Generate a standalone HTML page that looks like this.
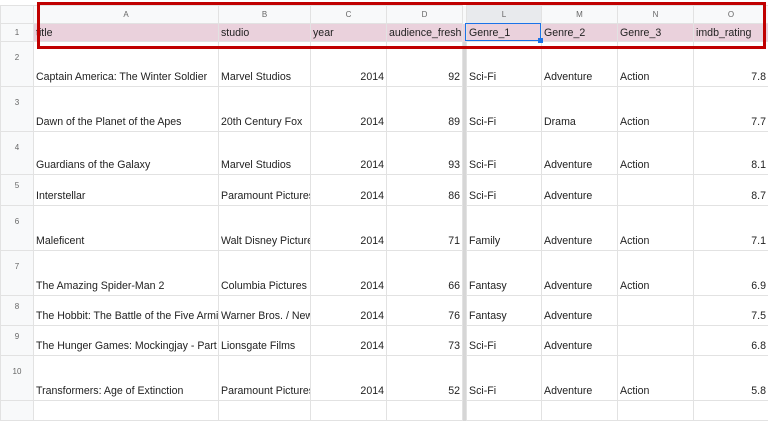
<!DOCTYPE html><html><head><style>
body{margin:0;width:768px;height:413px;overflow:hidden;background:#fff;font-family:"Liberation Sans",Arial,sans-serif;position:relative}
table{position:absolute;left:0;top:5px;width:768px;border-collapse:collapse;table-layout:fixed;font-size:10.6px;color:#222}
td{border:1px solid #e2e2e2;padding:0 2px 3px 2px;vertical-align:bottom;white-space:nowrap;overflow:hidden;height:0}
td.r{background:#f8f9fa;color:#666;font-size:8px;text-align:center;vertical-align:top;padding:11px 0 0 0}
tr.c td{background:#f8f9fa;color:#666;font-size:8px;text-align:center;vertical-align:middle;padding:0}
tr.p td{background:#ead1dc;vertical-align:middle;padding-bottom:0}
tr.p td.r{background:#f8f9fa;padding-top:0;vertical-align:middle}
.n{text-align:right}
td.d{background:#d6d6d6;border:none;padding:0}
.box{position:absolute;left:37px;top:2px;width:723px;height:41px;border:3px solid #c00000}
.sel{position:absolute;left:465px;top:23px;width:74px;height:16px;border:1px solid #1a73e8}
.sel:after{content:"";position:absolute;right:-3px;bottom:-3px;width:5px;height:5px;background:#1a73e8}
</style></head><body>
<table>
<colgroup><col style="width:33px"><col style="width:185px"><col style="width:92px"><col style="width:76px"><col style="width:76px"><col style="width:4px"><col style="width:75px"><col style="width:76px"><col style="width:76px"><col style="width:75px"></colgroup>
<tr class="c" style="height:18px"><td></td><td>A</td><td>B</td><td>C</td><td>D</td><td class="d"></td><td style="background:#e8eaed">L</td><td>M</td><td>N</td><td>O</td></tr>
<tr class="p" style="height:18px"><td class="r">1</td><td>title</td><td>studio</td><td>year</td><td>audience_freshr</td><td class="d"></td><td>Genre_1</td><td>Genre_2</td><td>Genre_3</td><td>imdb_rating</td></tr>
<tr style="height:45px"><td class="r">2</td><td>Captain America: The Winter Soldier</td><td>Marvel Studios</td><td class="n">2014</td><td class="n">92</td><td class="d"></td><td>Sci-Fi</td><td>Adventure</td><td>Action</td><td class="n">7.8</td></tr>
<tr style="height:45px"><td class="r">3</td><td>Dawn of the Planet of the Apes</td><td>20th Century Fox</td><td class="n">2014</td><td class="n">89</td><td class="d"></td><td>Sci-Fi</td><td>Drama</td><td>Action</td><td class="n">7.7</td></tr>
<tr style="height:43px"><td class="r">4</td><td>Guardians of the Galaxy</td><td>Marvel Studios</td><td class="n">2014</td><td class="n">93</td><td class="d"></td><td>Sci-Fi</td><td>Adventure</td><td>Action</td><td class="n">8.1</td></tr>
<tr style="height:31px"><td class="r" style="padding-top:6px">5</td><td>Interstellar</td><td>Paramount Pictures</td><td class="n">2014</td><td class="n">86</td><td class="d"></td><td>Sci-Fi</td><td>Adventure</td><td></td><td class="n">8.7</td></tr>
<tr style="height:45px"><td class="r">6</td><td>Maleficent</td><td>Walt Disney Pictures</td><td class="n">2014</td><td class="n">71</td><td class="d"></td><td>Family</td><td>Adventure</td><td>Action</td><td class="n">7.1</td></tr>
<tr style="height:45px"><td class="r">7</td><td>The Amazing Spider-Man 2</td><td>Columbia Pictures</td><td class="n">2014</td><td class="n">66</td><td class="d"></td><td>Fantasy</td><td>Adventure</td><td>Action</td><td class="n">6.9</td></tr>
<tr style="height:30px"><td class="r" style="padding-top:6px">8</td><td>The Hobbit: The Battle of the Five Armies</td><td>Warner Bros. / New</td><td class="n">2014</td><td class="n">76</td><td class="d"></td><td>Fantasy</td><td>Adventure</td><td></td><td class="n">7.5</td></tr>
<tr style="height:30px"><td class="r" style="padding-top:6px">9</td><td>The Hunger Games: Mockingjay - Part 1</td><td>Lionsgate Films</td><td class="n">2014</td><td class="n">73</td><td class="d"></td><td>Sci-Fi</td><td>Adventure</td><td></td><td class="n">6.8</td></tr>
<tr style="height:45px"><td class="r">10</td><td>Transformers: Age of Extinction</td><td>Paramount Pictures</td><td class="n">2014</td><td class="n">52</td><td class="d"></td><td>Sci-Fi</td><td>Adventure</td><td>Action</td><td class="n">5.8</td></tr>
<tr style="height:20px"><td class="r"></td><td></td><td></td><td></td><td></td><td class="d"></td><td></td><td></td><td></td><td></td></tr>
</table>
<div class="sel"></div>
<div class="box"></div>
</body></html>
